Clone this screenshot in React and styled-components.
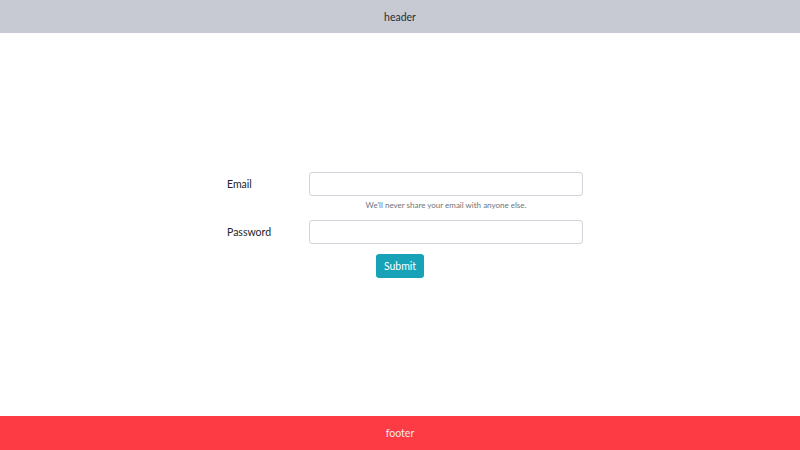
import React from "react";
import styled, { createGlobalStyle } from "styled-components";

const GlobalStyle = createGlobalStyle`
  html, body, #root {
    margin: 0;
    height: 100%;
  }
  body {
    font-family: Lato, "Open Sans", sans-serif;
    color: #212529;
  }
`;

function App() {
  return (
    <>
      <GlobalStyle />
      <Page>
        <Header>header</Header>
        <Main>
          <Form onSubmit={(e) => e.preventDefault()}>
            <Row>
              <Label htmlFor="email">Email</Label>
              <Field>
                <Input id="email" type="email" />
                <Help>We'll never share your email with anyone else.</Help>
              </Field>
            </Row>
            <Row>
              <Label htmlFor="password">Password</Label>
              <Field>
                <Input id="password" type="password" />
              </Field>
            </Row>
            <Actions>
              <SubmitButton type="submit">Submit</SubmitButton>
            </Actions>
          </Form>
        </Main>
        <Footer>footer</Footer>
      </Page>
    </>
  );
}

export default App;

const Page = styled.div`
  display: flex;
  flex-direction: column;
  height: 100vh;
`;
const Header = styled.header`
  height: 33px;
  display: flex;
  align-items: center;
  justify-content: center;
  background: #c7cad2;
  font-size: 10.5px;
  color: #2a2d33;
`;
const Footer = styled(Header)`
  height: 34px;
  background: #fd3b45;
  color: #fbe9ea;
`;
const Main = styled.main`
  flex: 1;
  display: flex;
  align-items: center;
  justify-content: center;
`;
const Form = styled.form`
  width: 356px;
  display: flex;
  flex-direction: column;
  gap: 10px;
  margin-left: 10px;
`;
const Row = styled.div`
  display: grid;
  grid-template-columns: 82px 274px;
  align-items: start;
`;
const Label = styled.label`
  font-size: 10.5px;
  line-height: 24px;
`;
const Field = styled.div`
  display: flex;
  flex-direction: column;
  align-items: center;
`;
const Input = styled.input`
  box-sizing: border-box;
  width: 100%;
  height: 24px;
  border: 1px solid #ced4da;
  border-radius: 3px;
  background: #fff;
  outline: none;
`;
const Help = styled.small`
  margin-top: 4px;
  font-size: 8px;
  color: #6c757d;
`;
const Actions = styled.div`
  display: flex;
  justify-content: center;
  padding-right: 10px;
`;
const SubmitButton = styled.button`
  height: 24px;
  padding: 0 8px;
  border: none;
  border-radius: 3px;
  background: #17a2b8;
  color: #fff;
  font-family: inherit;
  font-size: 10.5px;
  cursor: pointer;
`;
